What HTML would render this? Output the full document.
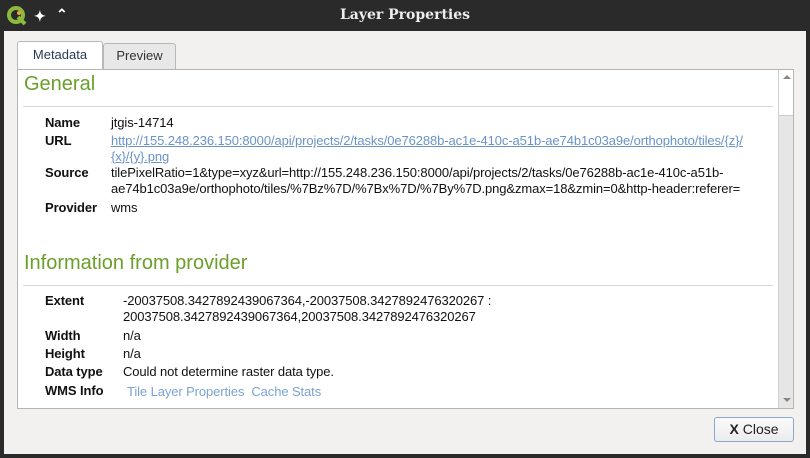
<!DOCTYPE html>
<html><head><style>
*{margin:0;padding:0;box-sizing:border-box}
body{width:810px;height:458px;background:#2a2a2a;font-family:"Liberation Sans",sans-serif;position:relative;overflow:hidden}
.title{position:absolute;left:0;top:0;width:810px;height:31px;color:#eee;font-weight:bold;font-size:14px;text-align:center;line-height:31px;font-family:"DejaVu Serif","Liberation Serif",serif}
.client{position:absolute;left:4px;top:31px;width:802px;height:423px;background:#f2f1f0}
.tab{position:absolute;font-size:13px;color:#333;text-align:center;border:1px solid #b8b8b8;border-bottom:none;border-radius:3px 3px 0 0}
.panel{position:absolute;left:17px;top:69px;width:777px;height:340px;border:1px solid #b5b5b5;background:#fff}
.sb{position:absolute;left:778px;top:70px;width:15px;height:338px;background:#e6e6e6;border-left:1px solid #d0d0d0}
.t{position:absolute;font-size:13px;color:#111;white-space:nowrap;letter-spacing:-0.1px}
.b{font-weight:bold}
h2{position:absolute;font-weight:normal;color:#6a9f2a;font-size:20px;left:24px}
.hr{position:absolute;left:23px;width:750px;height:1px;background:#d8d8d8}
a{color:#6a93c8;text-decoration:underline}
.lk{color:#7ba3d2}
</style></head><body>
<div class="title">Layer Properties</div>
<svg style="position:absolute;left:6px;top:5px" width="22" height="22" viewBox="0 0 22 22"><circle cx="10" cy="10" r="7" fill="none" stroke="#8cba3c" stroke-width="4"/><path d="M12 12 L19 19" stroke="#8cba3c" stroke-width="4"/><circle cx="13" cy="8" r="2" fill="#e8a33c"/></svg>
<div style="position:absolute;left:34px;top:8px;color:#fff;font-size:14px;font-weight:bold">✦</div>
<div style="position:absolute;left:56px;top:6px;color:#fff;font-size:14px;font-weight:bold">⌃</div>
<div class="client"></div>
<div class="tab" style="left:17px;top:41px;width:86px;height:29px;background:#fff;line-height:26px;color:#2a3a55">Metadata</div>
<div class="tab" style="left:103px;top:43px;width:73px;height:27px;background:#e8e8e8;line-height:24px">Preview</div>
<div class="panel"></div>
<div class="sb"><div style="position:absolute;left:0;top:0;width:14px;height:46px;background:#fff;border-bottom:1px solid #ccc"></div>
<div style="position:absolute;left:4px;top:5px;border:4px solid transparent;border-bottom:4px solid #888;border-top:none"></div>
<div style="position:absolute;left:4px;top:328px;border:4px solid transparent;border-top:4px solid #888;border-bottom:none"></div></div>
<h2 style="top:73px">General</h2>
<div class="hr" style="top:106px"></div>
<div class="t b" style="left:45px;top:115px">Name</div><div class="t" style="left:111px;top:115px">jtgis-14714</div>
<div class="t b" style="left:45px;top:133px">URL</div><div class="t" style="left:111px;top:133px;line-height:16px"><a>http://155.248.236.150:8000/api/projects/2/tasks/0e76288b-ac1e-410c-a51b-ae74b1c03a9e/orthophoto/tiles/{z}/</a><br><a>{x}/{y}.png</a></div>
<div class="t b" style="left:45px;top:165px">Source</div><div class="t" style="left:111px;top:165px;line-height:16px">tilePixelRatio=1&amp;type=xyz&amp;url=http://155.248.236.150:8000/api/projects/2/tasks/0e76288b-ac1e-410c-a51b-<br>ae74b1c03a9e/orthophoto/tiles/%7Bz%7D/%7Bx%7D/%7By%7D.png&amp;zmax=18&amp;zmin=0&amp;http-header:referer=</div>
<div class="t b" style="left:45px;top:200px">Provider</div><div class="t" style="left:111px;top:200px">wms</div>
<h2 style="top:252px">Information from provider</h2>
<div class="hr" style="top:285px"></div>
<div class="t b" style="left:45px;top:293px">Extent</div><div class="t" style="left:123px;top:293px;line-height:16px">-20037508.3427892439067364,-20037508.3427892476320267 :<br>20037508.3427892439067364,20037508.3427892476320267</div>
<div class="t b" style="left:45px;top:328px">Width</div><div class="t" style="left:123px;top:328px">n/a</div>
<div class="t b" style="left:45px;top:346px">Height</div><div class="t" style="left:123px;top:346px">n/a</div>
<div class="t b" style="left:45px;top:364px">Data type</div><div class="t" style="left:123px;top:364px">Could not determine raster data type.</div>
<div class="t b" style="left:45px;top:383px">WMS Info</div><div class="t lk" style="left:127px;top:384px">Tile Layer Properties&nbsp; Cache Stats</div>
<div style="position:absolute;left:714px;top:417px;width:80px;height:25px;border:1px solid #8aa8d0;border-radius:3px;background:linear-gradient(#fbfbfb,#ebebeb);font-size:14px;line-height:23px;text-align:center;color:#222"><b>X</b> Close</div>
</body></html>
